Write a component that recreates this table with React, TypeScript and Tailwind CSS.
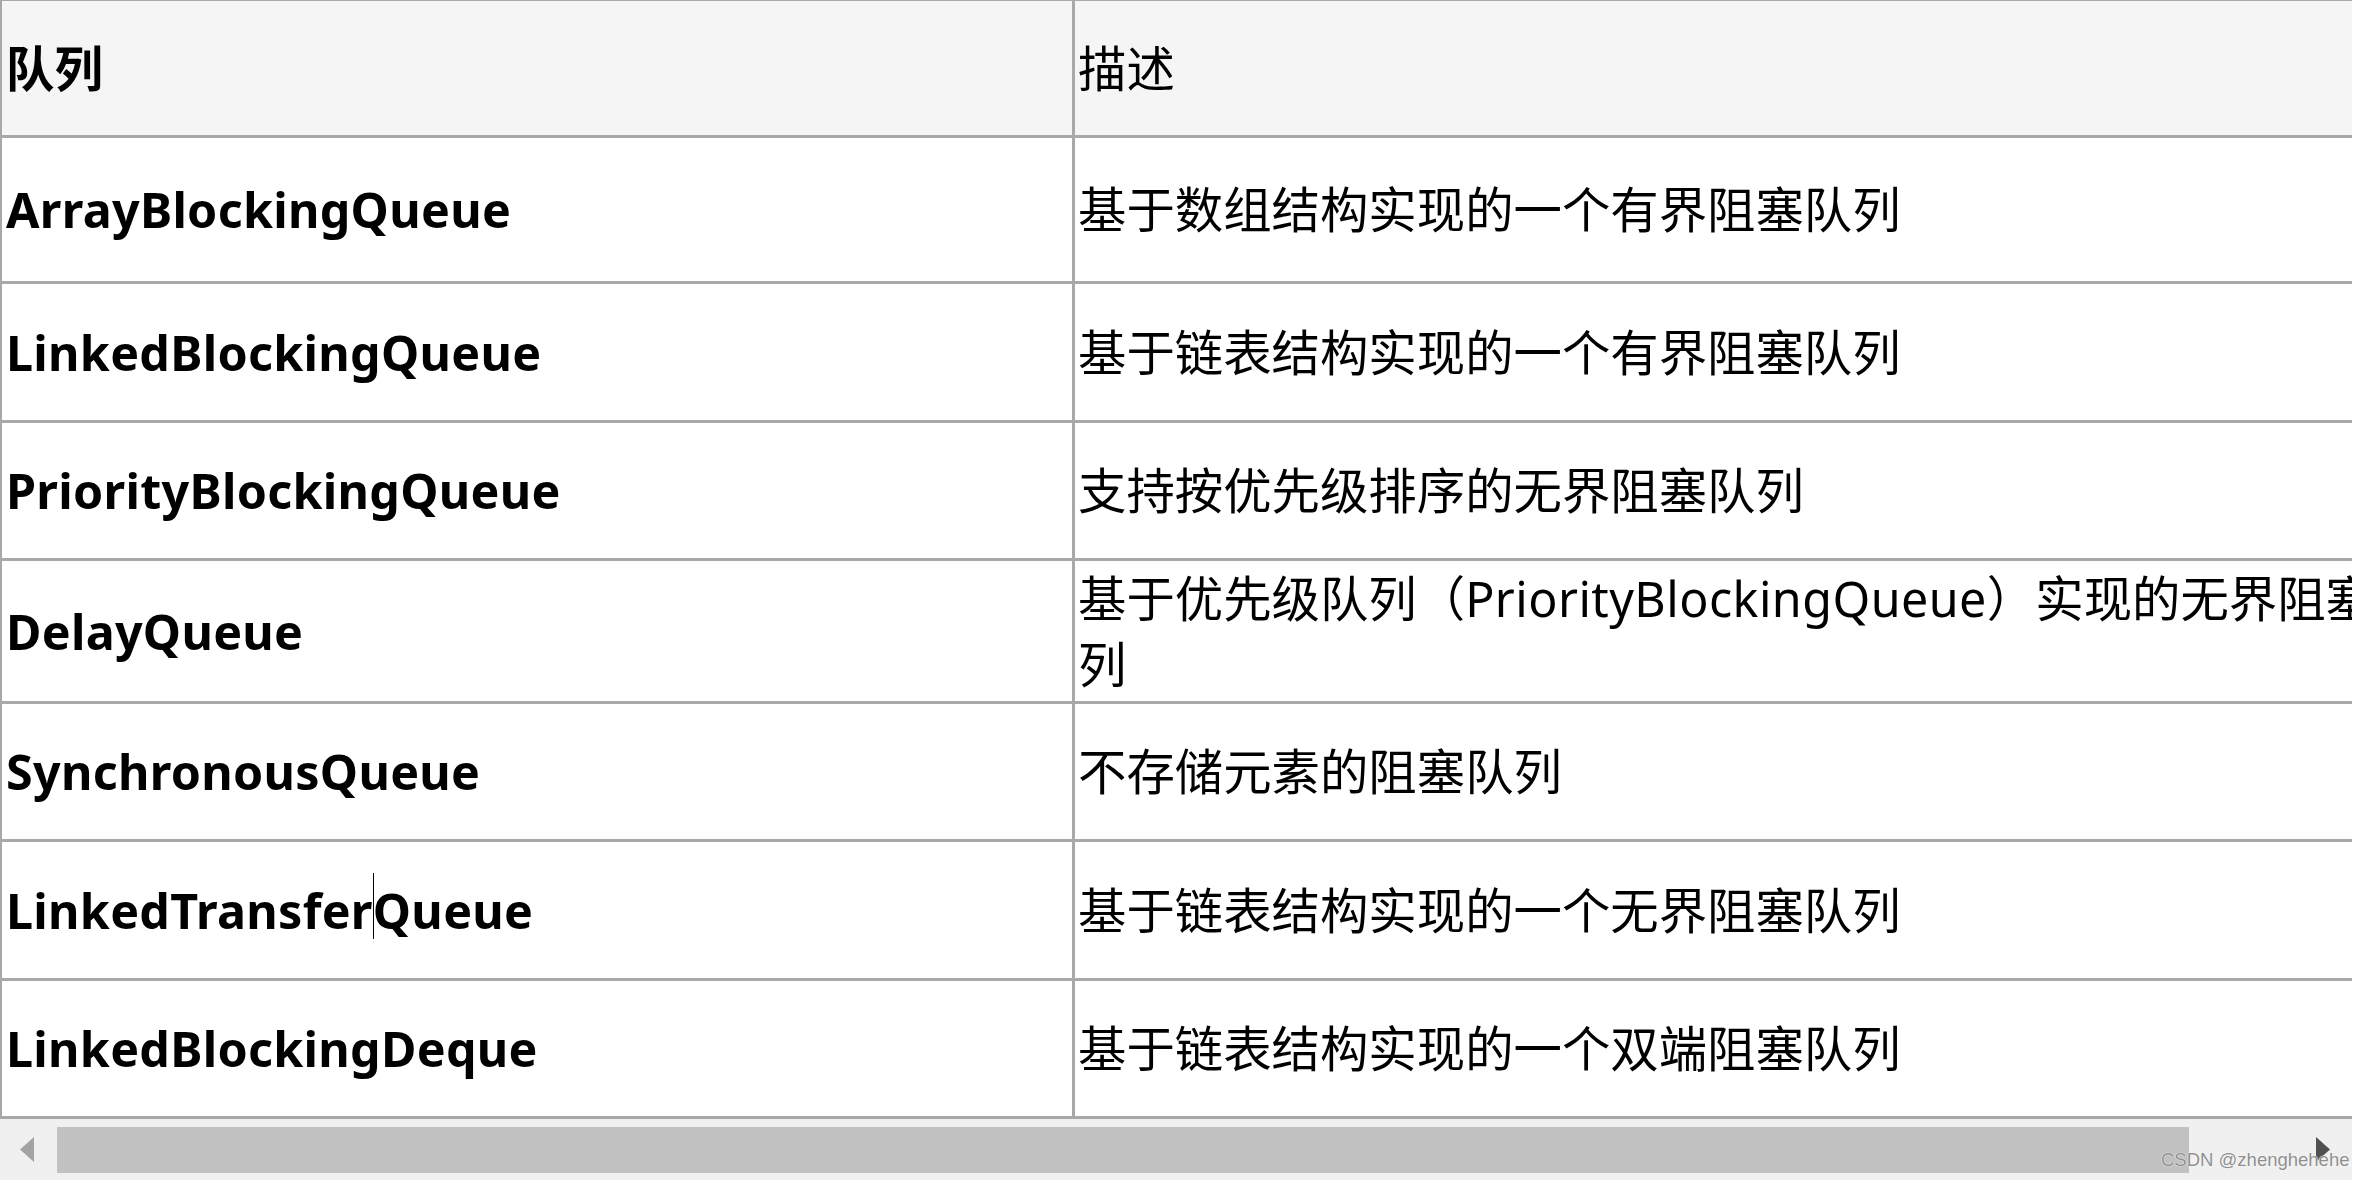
import React from "react";

const FONT = '"Noto Sans", "Noto Sans CJK SC", sans-serif';

type Row = { name: React.ReactNode; desc: React.ReactNode; h: string };

const rows: Row[] = [
  { name: "ArrayBlockingQueue", desc: "基于数组结构实现的一个有界阻塞队列", h: "h-[143px]" },
  { name: "LinkedBlockingQueue", desc: "基于链表结构实现的一个有界阻塞队列", h: "h-[136px]" },
  { name: "PriorityBlockingQueue", desc: "支持按优先级排序的无界阻塞队列", h: "h-[135px]" },
  {
    name: "DelayQueue",
    desc: (
      <div className="flex flex-col leading-[66px] whitespace-nowrap">
        <span>
          基于优先级队列（<span className="tracking-[0.45px]">PriorityBlockingQueue</span>）实现的无界阻塞队
        </span>
        <span>列</span>
      </div>
    ),
    h: "h-[140px]",
  },
  { name: "SynchronousQueue", desc: "不存储元素的阻塞队列", h: "h-[135px]" },
  {
    name: (
      <>
        LinkedTransfer
        <span className="inline-block w-px h-[66px] bg-black align-middle -mr-px relative top-[-4px]" />
        Queue
      </>
    ),
    desc: "基于链表结构实现的一个无界阻塞队列",
    h: "h-[136px]",
  },
  { name: "LinkedBlockingDeque", desc: "基于链表结构实现的一个双端阻塞队列", h: "h-[135px]" },
];

export default function App() {
  return (
    <div
      className="relative w-[2364px] h-[1180px] bg-white overflow-hidden text-black"
      style={{ fontFamily: FONT }}
    >
      <div className="w-[2352px] overflow-hidden">
        <div className="w-[2800px] border-t border-l-2 border-[#a8a8a8]">
          {/* header */}
          <div className="flex h-[137px] bg-[#f5f5f5] border-b-[3px] border-[#a8a8a8]">
            <div className="w-[1070px] shrink-0 flex items-center pl-[4px] text-[48.4px] font-bold">
              队列
            </div>
            <div className="w-[3px] shrink-0 bg-[#a8a8a8]" />
            <div className="flex-1 flex items-center pl-[3px] text-[48.4px]">描述</div>
          </div>
          {rows.map((r, i) => (
            <div
              key={i}
              className={`flex ${r.h} box-content border-b-[3px] border-[#a8a8a8]`}
            >
              <div className="w-[1070px] shrink-0 flex items-center pl-[4px] text-[48.4px] font-bold tracking-[0.3px] whitespace-nowrap">
                {r.name}
              </div>
              <div className="w-[3px] shrink-0 bg-[#a8a8a8]" />
              <div className="flex-1 flex items-center pl-[3px] text-[48.4px] whitespace-nowrap">
                {r.desc}
              </div>
            </div>
          ))}
        </div>
      </div>
      {/* scrollbar */}
      <div className="w-[2352px] h-[61px] bg-[#f0f0f0] flex items-center">
        <div className="w-[57px] h-full flex items-center justify-center pr-[4px]">
          <svg width="14" height="25" viewBox="0 0 14 25">
            <polygon points="14,0 14,25 0,12.5" fill="#a3a3a3" />
          </svg>
        </div>
        <div className="w-[2132px] h-[46px] bg-[#c1c1c1]" />
        <div className="flex-1 h-full flex items-center justify-end pr-[22px]">
          <svg width="14" height="25" viewBox="0 0 14 25">
            <polygon points="0,0 0,25 14,12.5" fill="#505050" />
          </svg>
        </div>
      </div>
      <div
        className="absolute left-[2161px] top-[1151px] text-[18.5px] leading-none text-[#8f8f8f] whitespace-nowrap"
        style={{ fontFamily: '"Liberation Sans", Arial, sans-serif', textShadow: "0 0 1px #fff, 0 0 1px #fff" }}
      >
        CSDN @zhenghehehe
      </div>
    </div>
  );
}
